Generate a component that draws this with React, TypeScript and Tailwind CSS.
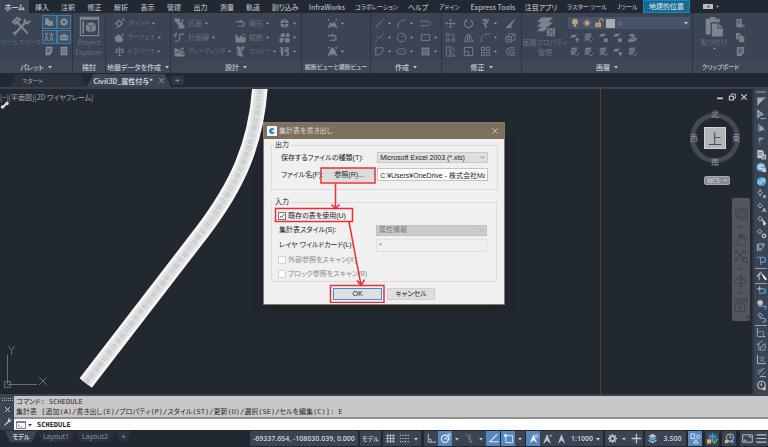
import React from 'react';
import { clsx } from 'clsx';

// Icons share a 12x12 grid and take their colour from the text.
const ICONS: Record<string, React.ReactNode> = {
  tools: (
    <>
      <path d="M2.6 2.6 9.6 10" strokeWidth="1.3" />
      <path d="M9 3 2.4 9.9" strokeWidth="1.3" />
      <path d="M1 3.4 3.6 1l1.6 1-2.6 2.6zM8 1.6 7.6 3.8 9.6 4.2 11 2.8M1.2 9.2l1.4 1.6" strokeWidth="1.1" />
    </>
  ),
  palette1: <path d="M2 2h3v2h1v5H2zM7 5h3v5H5V9h2z" fill="currentColor" />,
  gear: (
    <>
      <circle cx="6" cy="6" r="2.6" strokeWidth="1.8" />
      <path d="M6 1v2M6 9v2M1 6h2M9 6h2M2.5 2.5l1.3 1.3M8.2 8.2l1.3 1.3M9.5 2.5 8.2 3.8M3.8 8.2 2.5 9.5" strokeWidth="1.5" />
    </>
  ),
  survey: <path d="M1 2h4M3 2v3L1 11M3 5l2 6M7 3h4M9 1v4l-2 6M9 5l2 6" />,
  toolbox: (
    <>
      <path d="M1.5 4.5h9v5h-9z" fill="currentColor" />
      <path d="M4 4V2.5h4V4" />
      <path d="M1.5 7h9" stroke="#3b4a5e" />
    </>
  ),
  sheet: (
    <>
      <path d="M2 1h8v6l-3 4H2z" fill="currentColor" stroke="none" />
      <path d="M3.5 3.5h5M3.5 5.5h5M3.5 7.5h3" stroke="#3b4453" />
    </>
  ),
  calc: (
    <>
      <path d="M2 1h8v10H2z" fill="currentColor" stroke="none" />
      <path d="M3.5 3.5h5M3.5 6h5M3.5 8.5h5" stroke="#3b4453" strokeDasharray="2 1" />
    </>
  ),
  explorer: (
    <>
      <path d="M.8.8h10.4v10.4H.8z" strokeWidth=".7" />
      <path d="M.8 1.6h10.4M2.4 3v7" strokeWidth="1" />
      <path d="M6.8 3.4 9.6 4.6v3.6L6.8 9.6 4 8.2V4.6z" fill="currentColor" stroke="none" />
      <path d="M4 4.7l2.8 1.3 2.8-1.3M6.8 6v3.4" stroke="#3b4453" strokeWidth=".4" />
    </>
  ),
  point: (
    <>
      <path d="M2 6l3.4-3.4L9 6 5.4 9.6z" strokeWidth="1.4" />
      <path d="M7.5 4.5 11 1M9 1.2h2v2M3 10l-1 1.5" />
    </>
  ),
  surface: (
    <>
      <path d="M1 6l4-3 3 2 2 4-3 2-5-1z" fill="currentColor" />
      <path d="M8 3h3M9.5 1.5v3" />
    </>
  ),
  traverse: <path d="M6 1v10M1.5 3.5h9M3 3.5 1.5 7h3L3 3.5M9 3.5 7.500 7h3L9 3.500M4 10.500h4" />,
  parcel: (
    <>
      <path d="M1 1h5v3H1zM3 5h6v3H5zM6 8h5v3H5z" fill="currentColor" />
      <path d="M8 2.500h3M9.500 1v3" />
    </>
  ),
  featureLine: <path d="M1 9.500c3 2 6-1 5-4S8 1 11 3M1 3l2-2M1 6V3h2" strokeWidth="1.3" />,
  grading: (
    <>
      <path d="M1 2.500 4 4l7 3v4H1z" fill="currentColor" />
      <path d="M1 8l4-2 6 3" stroke="#3b4453" />
      <path d="M7 3h4M9 1v4" />
    </>
  ),
  align: <path d="M1 4h6c4 0 4 5 0 5H3M5 2l3 2" strokeWidth="1.2" />,
  profile: (
    <>
      <path d="M1 11V3l3 4 3-3 2 3 2-2v6z" fill="currentColor" />
      <path d="M8 2.500h3" />
    </>
  ),
  corridor: (
    <>
      <path d="M2 1h3l3 10H5zM7 1h3L8 5z" fill="currentColor" />
      <path d="M1 6l3 5" />
    </>
  ),
  globe: (
    <>
      <circle cx="6" cy="6" r="4.600" fill="currentColor" stroke="none" />
      <path d="M6 1.500v9M1.500 6h9" stroke="#3b4453" />
    </>
  ),
  assembly: <path d="M1 7h4l-1 4H1zM7 7h4v4H7zM3 2h3v3H2zM8 2h3v3H8z" fill="currentColor" />,
  pipes: <path d="M1 2h3v8M3 3v8M7 2h3v2H7v2h3v4H7M1 6h3" strokeWidth="1.500" />,
  view1: (
    <>
      <path d="M2 9l2-4 2 2 2-3 2 5z" fill="currentColor" />
      <path d="M1 1.500h2M9 1.500h2M1 10.500h2M9 10.500h2M1.500 1v2M10.500 1v2M1.500 9v2M10.500 9v2" />
    </>
  ),
  view2: (
    <>
      <path d="M2 9l2-5h4l2 5z" fill="currentColor" />
      <circle cx="6" cy="3.500" r="1.500" fill="currentColor" />
      <path d="M1 1.500h2M9 1.500h2M1 10.500h2M9 10.500h2M1.500 1v2M10.500 1v2M1.500 9v2M10.500 9v2" />
    </>
  ),
  line: <path d="M1.500 10.500l9-9" />,
  arc: <path d="M2 10.500C2 5 5 2 10.500 2" />,
  pline: <path d="M1 3.500h7c4 0 4 5 0 5H1M1 2.500v2" />,
  xline: <path d="M1.500 10.500l9-9M2 4l3 3M7 5l3 3" strokeDasharray="2.500 1" />,
  circle: (
    <>
      <circle cx="6" cy="6" r="4.700" />
      <path d="M6 6l3-2.500" />
    </>
  ),
  rect: <path d="M1.500 2.800h9v6.400h-9z" />,
  spline: <path d="M2 10V2h8c0 5-3 8-8 8zM1 3l2-2" />,
  ellipse: (
    <>
      <ellipse cx="6" cy="6" rx="4.800" ry="3" />
      <path d="M5.500 6h1" />
    </>
  ),
  hatch: (
    <>
      <path d="M2.500 2.500h7v7h-7z" fill="currentColor" fillOpacity=".6" />
      <path d="M1 2.500h10M1 9.500h10M2.500 1v10M9.500 1v10" strokeWidth=".7" />
    </>
  ),
  move: <path d="M6 1v10M1 6h10M4.500 2.500 6 1l1.500 1.500M4.500 9.500 6 11l1.500-1.500M2.500 4.500 1 6l1.500 1.500M9.500 4.500 11 6 9.500 7.500" />,
  rotate: <path d="M8 2.200A4.400 4.400 0 1 1 4 2.200M4 .8v2.500H1.800" strokeWidth="1.100" />,
  trim: <path d="M2 2h8M6 1v10M3 5l5 5M9 4 6 6M3 2l6 3" strokeWidth="1.200" />,
  brush: <path d="M11 1 5.500 6.500l1 1zM5.500 7c-2 0-2.500 3-4.500 3.500h6z" fill="currentColor" />,
  copy: (
    <>
      <circle cx="3" cy="3" r="1.700" />
      <circle cx="3" cy="8.800" r="1.700" />
      <circle cx="9" cy="8.800" r="1.700" />
      <path d="M6 3h3.500v3" />
    </>
  ),
  mirror: <path d="M5 2v8.500H1zM7 2v8.500h4z" />,
  fillet: <path d="M1.500 11V8c0-4 2-6 6-6H11" strokeDasharray="3 .5" />,
  explode: <path d="M1 5h6v6H1zM3 5V3.500L5 2h6v6l-2 1H7M7 5l3-2M3.500 7h1.500v2H3.500z" />,
  stretch: <path d="M1.500 1h4v10h-4zM5.500 5l5 6h-5M7 1l4 5" />,
  scale: <path d="M1.500 1.500h9v9h-9zM1.500 6H6v4.500" />,
  array: <path d="M1.500 1.500h3.500v3.500H1.500zM7 1.500h3.500v3.500H7zM1.500 7h3.500v3.500H1.500zM7 7h3.500v3.500H7z" />,
  offset: <path d="M11 2H5.500a4 4 0 0 0 0 8H11M11 4.500H6a1.500 1.500 0 0 0 0 3h5" />,
  layers: (
    <>
      <path d="M3.800 1H10L7.600 3.400H1.400zM3.800 3.600H10L7.600 6H1.400zM3.800 6.200h3L5.400 8.600h-4z" fill="currentColor" strokeWidth=".3" />
      <path d="M6.800 7h4.600v4.600H6.800z" fill="currentColor" stroke="none" />
      <path d="M8 7v1.600h2.200V7M8 11.600V9.800h2.400v1.800" stroke="#3b4453" strokeWidth=".5" />
    </>
  ),
  layerA: (
    <>
      <path d="M3.500 3H9L6 6H1z" fill="currentColor" stroke="none" />
      <circle cx="9" cy="8" r="1.800" fill="currentColor" stroke="none" />
      <path d="M9 9v2.500" />
    </>
  ),
  layerB: (
    <>
      <path d="M3.500 1.500H10L7 4.500H1zM3.500 4H10L7 7H1zM3.500 6.500H8L6 9.500H1z" fill="currentColor" stroke="#3b4453" strokeWidth=".4" />
      <path d="M7 9.500l1.200 1.500L11 7.500" />
    </>
  ),
  layerC: (
    <>
      <path d="M3.500 2H9L6 5H1z" fill="currentColor" stroke="none" />
      <path d="M6.500 7h4v4h-4z" fill="currentColor" stroke="none" />
    </>
  ),
  layerD: (
    <>
      <path d="M5.500 1.500l4 2-4 2-4-2zM1 9l2-2 5-2 3 2-1 2-4 2H2z" fill="currentColor" stroke="none" />
      <path d="M1.500 6.500l4 1.800 4.500-2" stroke="#3b4453" strokeWidth=".6" />
    </>
  ),
  bulb: (
    <>
      <circle cx="6" cy="4.500" r="3.500" fill="#c2a566" stroke="none" />
      <path d="M4.500 8h3v2.500h-3z" fill="#a9adb3" stroke="none" />
    </>
  ),
  sun: (
    <>
      <circle cx="6" cy="6" r="2.800" fill="#c2a566" stroke="none" />
      <path d="M6 .8v10.400M.8 6h10.400M2.300 2.300l7.400 7.400M9.700 2.300 2.300 9.700" stroke="#c2a566" strokeWidth=".8" />
    </>
  ),
  unlock: (
    <>
      <path d="M1.500 5.500h7V11h-7z" fill="#c2a566" stroke="none" />
      <path d="M6.800 6V2.500a1.900 1.900 0 0 1 3.700 0V4" stroke="#c2a566" strokeWidth="1.200" />
      <path d="M5 7.500v2" stroke="#46536a" />
    </>
  ),
  paste: (
    <>
      <path d="M1 1.500h8v2H3.800v7H1zM3.500.5h3v1.500h-3z" fill="currentColor" stroke="none" />
      <path d="M4.500 4.300h3.700l2.600 2.500v4.900H4.500z" fill="currentColor" stroke="none" />
      <path d="M8 4.300V7h2.800" stroke="#3b4453" strokeWidth=".5" />
    </>
  ),
  cut: (
    <>
      <path d="M1.500 1h6v9h-6z" fill="currentColor" stroke="none" />
      <path d="M3 3.500h3M3 5.500h3" stroke="#3b4453" />
      <path d="M6 6l5 5M11 6l-5 5" />
    </>
  ),
  clone: (
    <>
      <path d="M1 1h5v7H1z" fill="currentColor" stroke="none" />
      <path d="M4 3.500h4l2.500 2.500v5.500H4z" fill="currentColor" stroke="#3b4453" strokeWidth=".6" />
    </>
  ),
  cursorL: (
    <>
      <path d="M1.500 1.500h9l-9 9z" fill="currentColor" fillOpacity=".8" stroke="none" />
      <path d="M7 3l3.500-1.500" stroke="#5a9bd5" />
    </>
  ),
  cursorR: <path d="M2 1v9l2.500-3L8 6zM5 10.500h6" strokeDasharray="4 .6" fill="currentColor" fillOpacity=".5" />,
  cursorB: (
    <>
      <path d="M4 2v8l2-2h3z" fill="#7fa8cf" stroke="none" />
      <path d="M3 1v8M6 3l3 5" strokeWidth=".8" />
    </>
  ),
  cursorS: <path d="M2.500 2h7L4.500 5v5.500z" fill="currentColor" fillOpacity=".6" stroke="none" />,
  docs: (
    <>
      <path d="M1.500 1h5l2 2v7h-7zM6 6h5v5.500H6z" fill="currentColor" stroke="none" />
      <path d="M3 4h4M3 6h3M7 8h3M7 10h3" stroke="#3b4453" strokeWidth=".7" />
    </>
  ),
  earth: (
    <>
      <circle cx="5.500" cy="5.500" r="4.800" fill="#5fb2dc" stroke="none" />
      <path d="M2 3.500c2 2 4-1 6 .5M2 7c1-2 3 1 5 0" stroke="#e2e9ee" strokeWidth="1.300" />
      <path d="M7 7h4v4H7z" fill="#c9ccd0" stroke="none" />
    </>
  ),
  earth2: (
    <>
      <circle cx="6" cy="6" r="5" fill="#4aa2d2" stroke="none" />
      <circle cx="4" cy="7" r="1.700" stroke="#dbe7ef" />
      <circle cx="8" cy="4.500" r="1.700" stroke="#dbe7ef" />
    </>
  ),
  nodeBlue: (
    <>
      <path d="M4.500 1.500l2.500 2.500-2.500 2.500L2 4zM4.500 0v2M4.500 6v2" />
      <path d="M7.500 6.500h3.500V10H7.500z" fill="#5aa7e0" stroke="none" />
    </>
  ),
  nodeA: <path d="M4.500 1.500l2.500 2.500-2.500 2.500L2 4zM7 11l2-4.500 2 4.500M7.800 9.500h2.400" />,
  nodeCursor: (
    <>
      <path d="M4.500 1.500l2.500 2.500-2.500 2.500L2 4z" />
      <path d="M7 5l4 4.500H9.500L10 11H8.500z" fill="#eef0f2" />
    </>
  ),
  nodeQ: (
    <>
      <path d="M4 1.500l2.500 2.500L4 6.500 1.500 4z" />
      <circle cx="8.800" cy="8.500" r="1.900" strokeWidth="1.400" />
    </>
  ),
  flag: (
    <>
      <path d="M1.500 2v8M3 2v6c3 0 6-2 6-6zM3 9h3" strokeWidth=".9" />
      <path d="M5 4l4-1" stroke="#5aa7e0" />
    </>
  ),
  road: <path d="M1 2.500h6.500c4 0 4 5.500 0 5.500H5V11M5 2.500V8" stroke="#5a9bd5" strokeWidth="1.200" />,
  peak: (
    <>
      <path d="M1 8l4-6 4 5M3.500 4v7M1 6l5-2" />
      <path d="M7 5l4.500 5H9.500z" fill="#fff" stroke="#fff" />
    </>
  ),
  curve: (
    <>
      <path d="M1 4h5M4 1v6" />
      <path d="M6 4c6 0 6 5 0 5H3" stroke="#5a9bd5" strokeWidth="1.300" />
    </>
  ),
  blob: (
    <>
      <circle cx="4.500" cy="4" r="3" fill="currentColor" stroke="none" />
      <path d="M3 8h5c4-2 4 3 1 3" stroke="#5a9bd5" strokeWidth="1.300" />
    </>
  ),
  nodeCurve: (
    <>
      <path d="M4.500 1l2.500 2.500L4.500 6 2 3.500z" />
      <path d="M4 7h4c4 0 3 4-1 4" stroke="#5a9bd5" strokeWidth="1.300" />
    </>
  ),
  angle: (
    <>
      <path d="M1.500 1v9.500H11" strokeDasharray="3 .7" />
      <path d="M2 5h6v5" stroke="#5a9bd5" />
    </>
  ),
  angle2: (
    <>
      <path d="M1 5l6-4M3 4v7h7V3" strokeDasharray="2 .7" />
      <path d="M4 10l5-6" stroke="#5a9bd5" strokeWidth="1.300" />
    </>
  ),
  angle3: (
    <>
      <path d="M1.500 1v9.500H11" />
      <path d="M3 4h6L4 9M5 6l5 3" stroke="#5a9bd5" />
    </>
  ),
  angle4: (
    <>
      <path d="M2 8l7-7M4 10.500h7" />
      <path d="M1 5l5-3M5 10l5-5" stroke="#5a9bd5" />
    </>
  ),
  timer: (
    <>
      <circle cx="6" cy="5.500" r="4.200" strokeWidth="1.200" />
      <path d="M6 3v3l-2-1" />
      <circle cx="9" cy="9.500" r="1.900" fill="#dfbf78" stroke="none" />
    </>
  ),
  grid: <path d="M3 1v10M6 1v10M9 1v10M1 3h10M1 6h10M1 9h10" strokeWidth=".9" />,
  dots: <path d="M1 2.500h10M1 6h10M1 9.500h10" strokeWidth="1.300" strokeDasharray="1.300 1.500" />,
  ortho: <path d="M2.500 1v9H11M2.500 7h3v3" />,
  polar: (
    <>
      <circle cx="5.500" cy="6.300" r="4" strokeWidth="1.200" />
      <path d="M5 6.500h6M5 6.500 10 2M8 1h3v3" />
    </>
  ),
  iso: (
    <>
      <path d="M2 1l7 10" stroke="#a95a61" strokeWidth="1.200" />
      <path d="M6.500 1v7M6.500 9v2" stroke="#5f9a63" />
    </>
  ),
  track: <path d="M10 1.500 2 9.500h9.500" strokeWidth="1.200" />,
  snap: (
    <>
      <path d="M3 3h7.500v7.500H3z" />
      <path d="M1.500 1.500h2.500v2.500h-2.500z" fill="currentColor" strokeWidth=".6" />
    </>
  ),
  scaleA: (
    <>
      <path d="M6 1 2 11l4-3 4 3z" fill="currentColor" stroke="none" />
      <circle cx="9.500" cy="3" r="1.500" />
    </>
  ),
  scaleB: <path d="M5.500 2 2 11l3.500-3L9 11zM8 3h3M9.500 1.500v3" fill="currentColor" strokeWidth=".7" />,
  scaleC: <path d="M6 2 2.500 11 6 8l3.500 3z" fill="currentColor" strokeWidth=".5" />,
  plus: <path d="M6 .8v10.400M.8 6h10.400" strokeWidth="1.400" />,
  stack: (
    <>
      <path d="M6 .8l4.500 2.700L6 6 1.500 3.500zM6 11.200 1.500 8.500V7L6 9.500 10.500 7v1.500z" fill="currentColor" stroke="none" />
      <path d="M6 3.800 10.500 6 6 8.600 1.500 6z" fill="#5aa7e0" stroke="none" />
    </>
  ),
  shapes: (
    <>
      <path d="M1 1h4v5H1zM4 11l2.500-4L9 11z" />
      <circle cx="9" cy="4" r="1.800" />
    </>
  ),
  world: (
    <>
      <path d="M2 1h8v8H2z" fill="#2f6fb0" stroke="none" />
      <path d="M6 0v9M1 4h10" stroke="#7ba7cf" strokeWidth=".7" />
      <path d="M0 7h4.500v4.500H0z" fill="#f0b53a" stroke="none" />
      <path d="M5.500 8l2.500 3 4-5" stroke="#57b556" strokeWidth="1.600" />
    </>
  ),
  clock: (
    <>
      <circle cx="6.500" cy="5" r="4" />
      <path d="M6.500 2.500V5h2" />
      <path d="M1 7.500h4V11H1z" fill="#e0b95a" stroke="none" />
      <circle cx="8.500" cy="9.300" r="2" fill="#5aa7e0" stroke="none" />
    </>
  ),
  expand: <path d="M.8 2h10.400v8H.8zM3 7v1.300h1.800M7 3.700h2V5.500" />,
  menu: <path d="M.5 2h11M.5 6h11M.5 10h11" strokeWidth="1.300" />,
  wrench: <path d="M1.500 10.500 7 5a3 3 0 0 1 2-4l-.5 2.500 1 1L11.500 3A3 3 0 0 1 8 6.500l-5.500 5z" fill="currentColor" stroke="none" />,
  cross: <path d="M2 2l8 8M10 2l-8 8" strokeWidth="1.700" />,
  closeThin: <path d="M2 2l8 8M10 2l-8 8" strokeWidth="1.100" />,
  minimize: <path d="M1.500 8h9" strokeWidth="2.500" />,
  restore: (
    <>
      <path d="M2 5h6v5.500H2z" strokeWidth="1.600" />
      <path d="M4.500 4V1.500H11V8H9" strokeWidth="1.300" />
    </>
  ),
  wheel: (
    <>
      <circle cx="6" cy="6" r="2.200" strokeWidth=".7" />
      <path d="M3 1.500h6A1.500 1.500 0 0 1 10.800 3v6A1.500 1.500 0 0 1 9 10.500H6A4.800 4.800 0 0 1 1.200 6V3A1.500 1.500 0 0 1 3 1.500z" strokeWidth=".6" />
      <circle cx="6" cy="6" r="3.800" strokeWidth=".5" />
    </>
  ),
  hand: <path d="M3.500 11 1 7.500l.8-.7L4 8V3l1-.3L5.700 6V1.500h1V6L7.800 2l1 .2L8.500 6.500l1.300-2 .9.400L9 11z" strokeWidth=".6" />,
  extents: (
    <>
      <path d="M1 1l7 7M9 1 1 9M1 3V1h2M7 1h2v2M1 7v2h2" strokeWidth=".8" />
      <circle cx="8.500" cy="8.500" r="1.800" strokeWidth=".8" />
      <path d="M10 10l1.500 1.500" />
    </>
  ),
  orbit: (
    <>
      <ellipse cx="6" cy="6" rx="5" ry="2" strokeWidth=".8" />
      <path d="M6 1v10M4.500 2.500 6 1l1.500 1.500M4.500 9.500 6 11l1.500-1.500" strokeWidth=".8" />
    </>
  ),
  motion: <path d="M.5.8h3v2.700h-3zM4.500.8h3v2.700h-3zM8.500.8h3v2.700h-3zM1 5h8v6.500H1zM4 6.500v3.500L7 8.200z" strokeWidth=".6" />,
};

interface IconProps {
  name: string;
  className?: string;
}

function Icon({ name, className = 'size-[10px]' }: IconProps) {
  return (
    <svg viewBox="0 0 12 12" fill="none" stroke="currentColor" strokeWidth="1" className={clsx('shrink-0', className)} aria-hidden="true">
      {ICONS[name]}
    </svg>
  );
}

function Caret({ className = 'size-[4px]' }: { className?: string }) {
  return (
    <svg viewBox="0 0 4 4" className={clsx('shrink-0', className)} aria-hidden="true">
      <path d="M0 1h4L2 3.400z" fill="currentColor" />
    </svg>
  );
}

const MENU_TABS = [
  { label: '挿入', size: 'w-[26px]' },
  { label: '注釈', size: 'w-[26px]' },
  { label: '修正', size: 'w-[27px]' },
  { label: '解析', size: 'w-[26px]' },
  { label: '表示', size: 'w-[27px]' },
  { label: '管理', size: 'w-[26px]' },
  { label: '出力', size: 'w-[27px]' },
  { label: '測量', size: 'w-[26px]' },
  { label: '軌道', size: 'w-[26px]' },
  { label: '割り込み', size: 'w-[38px]' },
  { label: 'InfraWorks', size: 'w-[46px]' },
  { label: 'コラボレーション', size: 'w-[53px] text-[6px]' },
  { label: 'ヘルプ', size: 'w-[30px]' },
  { label: 'アドイン', size: 'w-[33px] text-[6px]' },
  { label: 'Express Tools', size: 'w-[54px]' },
  { label: '注目アプリ', size: 'w-[42px]' },
  { label: 'ラスター ツール', size: 'w-[50px] text-[6px]' },
  { label: 'Jツール', size: 'w-[31px] text-[6px]' },
];

function MenuTabs() {
  return (
    <nav className="flex h-[13px] bg-[#222832] text-[#b1b5ba]">
      <button className="w-[29px] shrink-0 bg-[#3b4453] font-bold text-[#c9cdd2]">ホーム</button>
      {MENU_TABS.map((tab) => (
        <button key={tab.label} className={clsx('flex shrink-0 items-center justify-center font-medium', tab.size)}>
          {tab.label}
        </button>
      ))}
      <button className="w-[47px] shrink-0 border border-[#1c86b4] bg-[#156a92] font-medium leading-[11px] text-[#d3dde3]">
        地理的位置
      </button>
      <button className="ml-[13px] flex items-center gap-[3px]" aria-label="表示切替">
        <span className="grid h-[5px] w-[10px] place-items-center bg-[#b9bdc1] text-[#222832]">
          <Caret className="size-[3px] rotate-180" />
        </span>
        <Caret className="size-[3px]" />
      </button>
    </nav>
  );
}

interface PanelProps {
  title: string;
  size: string;
  caret?: boolean;
  children: React.ReactNode;
}

function Panel({ title, size, caret = true, children }: PanelProps) {
  return (
    <section className={clsx('flex shrink-0 flex-col border-r border-[#2c3440]', size)}>
      <div className="flex flex-1 pt-[3px]">{children}</div>
      <h2
        className={clsx(
          'flex h-[13px] items-center justify-center gap-[4px] bg-[#3e4756] font-medium text-[#c3c7cc]',
          title.length > 8 ? 'text-[6px]' : 'text-[7px]',
        )}
      >
        {title}
        {caret && <Caret />}
      </h2>
    </section>
  );
}

interface ToolProps {
  icon: string;
  label?: string;
  caret?: boolean;
}

function Tool({ icon, label, caret }: ToolProps) {
  return (
    <button className="flex h-[14px] items-center gap-[3px]" aria-label={label ?? icon}>
      <Icon name={icon} className="size-[11px] text-[#79808a]" />
      {label && <span className={clsx('text-[#69717c]', label.length > 3 && 'text-[6px]')}>{label}</span>}
      {caret && <Caret className="size-[3px] text-[#a5aab0]" />}
    </button>
  );
}

function ToolColumn({ tools, className }: { tools: ToolProps[]; className?: string }) {
  return (
    <div className={clsx('flex shrink-0 flex-col items-start', className)}>
      {tools.map((tool) => (
        <Tool key={tool.icon} {...tool} />
      ))}
    </div>
  );
}

function BigTool({ icon, lines, className, caret }: { icon: string; lines: string[]; className?: string; caret?: boolean }) {
  return (
    <button className={clsx('flex shrink-0 flex-col items-center text-[#69717c]', className)}>
      <Icon name={icon} className="size-[21px] text-[#7d848e]" />
      {lines.map((line) => (
        <span key={line} className="h-[10px] leading-[10px]">
          {line}
        </span>
      ))}
      {caret && <Caret className="size-[3px] text-[#9ea3aa]" />}
    </button>
  );
}

function Ribbon() {
  return (
    <div className="flex h-[60px] bg-[#3b4453]">
      <Panel title="パレット" size="w-[73px]">
        <BigTool icon="tools" lines={['ツールスペース']} className="w-[42px] text-[6px]" />
        <div className="-mt-px grid h-[44px] w-[29px] grid-cols-2">
          {['palette1', 'gear', 'survey', 'toolbox'].map((name) => (
            <button
              key={name}
              aria-label={name}
              className="grid h-[14px] place-items-center border border-[#3f7ba3] bg-[#3d5066] text-[#8e969f]"
            >
              <Icon name={name} />
            </button>
          ))}
          {['sheet', 'calc'].map((name) => (
            <button key={name} aria-label={name} className="grid h-[14px] place-items-center text-[#8a9099]">
              <Icon name={name} />
            </button>
          ))}
        </div>
      </Panel>
      <Panel title="検討" size="w-[33px]" caret={false}>
        <BigTool icon="explorer" lines={['Project', 'Explorer']} className="w-full" />
      </Panel>
      <Panel title="地盤データを作成" size="w-[65px]">
        <ToolColumn
          className="pl-[8px]"
          tools={[
            { icon: 'point', label: 'ポイント', caret: true },
            { icon: 'surface', label: 'サーフェス', caret: true },
            { icon: 'traverse', label: 'トラバース', caret: true },
          ]}
        />
      </Panel>
      <Panel title="設計" size="w-[131px]">
        <ToolColumn
          className="w-[64px] pl-[3px]"
          tools={[
            { icon: 'parcel', label: '区画', caret: true },
            { icon: 'featureLine', label: '計画線', caret: true },
            { icon: 'grading', label: 'グレーディング', caret: true },
          ]}
        />
        <ToolColumn
          className="w-[44px]"
          tools={[
            { icon: 'align', label: '線形', caret: true },
            { icon: 'profile', label: '縦断', caret: true },
            { icon: 'corridor', label: 'コリドー', caret: true },
          ]}
        />
        <ToolColumn
          tools={[
            { icon: 'globe', caret: true },
            { icon: 'assembly', caret: true },
            { icon: 'pipes', caret: true },
          ]}
        />
      </Panel>
      <Panel title="縦断ビューと横断ビュー" size="w-[69px]" caret={false}>
        <ToolColumn
          className="pl-[25px]"
          tools={[{ icon: 'view1', caret: true }, { icon: 'align' }, { icon: 'view2', caret: true }]}
        />
      </Panel>
      <Panel title="作成" size="w-[71px]">
        <ToolColumn
          className="w-[22px] pl-[3px]"
          tools={[
            { icon: 'line', caret: true },
            { icon: 'xline', caret: true },
            { icon: 'spline', caret: true },
          ]}
        />
        <ToolColumn
          className="w-[24px] pl-[3px]"
          tools={[
            { icon: 'arc', caret: true },
            { icon: 'circle', caret: true },
            { icon: 'ellipse', caret: true },
          ]}
        />
        <ToolColumn
          className="pl-[3px]"
          tools={[{ icon: 'pline' }, { icon: 'rect', caret: true }, { icon: 'hatch', caret: true }]}
        />
      </Panel>
      <Panel title="修正" size="w-[80px]">
        <ToolColumn className="w-[21px] pl-[3px]" tools={[{ icon: 'move' }, { icon: 'copy' }, { icon: 'stretch' }]} />
        <ToolColumn className="w-[17px]" tools={[{ icon: 'rotate' }, { icon: 'mirror' }, { icon: 'scale' }]} />
        <ToolColumn
          className="w-[25px]"
          tools={[
            { icon: 'trim', caret: true },
            { icon: 'fillet', caret: true },
            { icon: 'array', caret: true },
          ]}
        />
        <ToolColumn tools={[{ icon: 'brush' }, { icon: 'explode' }, { icon: 'offset' }]} />
      </Panel>
      <Panel title="画層" size="w-[171px]">
        <BigTool icon="layers" lines={['画層プロパティ', '管理']} className="w-[46px]" />
        <div className="flex flex-1 flex-col pr-[2px]">
          <button className="mt-px flex h-[12px] items-center gap-[2px] bg-[#46536a] px-[2px] text-[#7c8492]">
            <Icon name="bulb" />
            <Icon name="sun" />
            <Icon name="unlock" />
            <span className="size-[9px] bg-[#a9adb3]" />
            <span className="flex-1 pl-px text-left">0</span>
            <Caret className="size-[4px] text-[#c3c7cc]" />
          </button>
          <div className="mt-px grid w-[72px] grid-cols-5 text-[#79808a]">
            {['layerA', 'layerB', 'layerC', 'layerC', 'layerD', 'layerB', 'layerB', 'layerB', 'layerA', 'layerB'].map((name, i) => (
              <button key={i} aria-label="画層" className="flex h-[14px] items-center pl-px">
                <Icon name={name} className="size-[11px]" />
              </button>
            ))}
          </div>
        </div>
      </Panel>
      <section className="flex flex-1 flex-col">
        <div className="flex flex-1 pt-[3px] pl-[9px]">
          <BigTool icon="paste" lines={['貼り付け']} className="w-[24px]" caret />
          <ToolColumn className="pl-[9px]" tools={[{ icon: 'cut' }, { icon: 'clone' }, { icon: 'sheet' }]} />
        </div>
        <h2 className="flex h-[13px] items-center bg-[#3e4756] pl-[9px] text-[6px] font-medium text-[#c3c7cc]">クリップボード</h2>
      </section>
    </div>
  );
}

function FileTabs() {
  return (
    <nav className="flex h-[16px] items-end border-b-2 border-[#38404e] bg-[#222832] pl-[10px] text-[#a3a8ae]">
      <button className="h-[13px] w-[77px] bg-[#2b323d] pr-[40px] [clip-path:polygon(6px_0,calc(100%-6px)_0,100%_100%,0_100%)]">
        <span className="pl-[8px] text-[6px]">スタート</span>
      </button>
      <button className="flex h-[13px] w-[84px] items-center justify-center gap-[5px] bg-[#3b4453] text-[7px] font-bold text-[#cdd0d4] [clip-path:polygon(6px_0,calc(100%-6px)_0,100%_100%,0_100%)]">
        Civil3D_属性付与*
        <Icon name="closeThin" className="size-[7px]" />
      </button>
      <button aria-label="新規図面" className="mb-[2px] grid h-[9px] w-[13px] place-items-center rounded-[3px] bg-[#2f3743]">
        <Icon name="plus" className="size-[5px]" />
      </button>
    </nav>
  );
}

// Corridor centre line in canvas coordinates, from the top edge down to its start point.
const CORRIDOR = 'M260 -2C256 56 237 97 202 143L85.700 294';

function Drawing() {
  return (
    <svg className="absolute inset-0 size-full" fill="none">
      <path d="M600.500 0V2000" stroke="#5f4128" strokeWidth="1" />
      <g>
        <path d={CORRIDOR} stroke="#f6f6f6" strokeWidth="15.500" />
        <path d={CORRIDOR} stroke="#dfe0e1" strokeWidth="10" />
        <path d={CORRIDOR} stroke="#d3d4d6" strokeWidth="5" />
        <path d={CORRIDOR} stroke="#c6c8ca" strokeWidth="3" strokeDasharray="9 4 2 3" />
        <path d={CORRIDOR} stroke="#dcddde" strokeWidth=".8" />
        <path d={CORRIDOR} stroke="#ececed" strokeWidth="11" strokeDasharray=".8 6.500" />
      </g>
      <g stroke="#686e75">
        <path d="M7.500 266v29.500H37M4.500 292.500h6v6h-6z" />
        <path d="M8.500 257l3 4.500 3-4.500M11.500 261.500v4.500M39 288l8 8M47 288l-8 8" />
      </g>
      <g fill="#d9dbdd">
        <circle cx="7" cy="14.500" r="1.800" />
        <circle cx="2.500" cy="18" r="1.800" />
        <path d="M3 16.500l3-3 1 2-3 3z" />
      </g>
    </svg>
  );
}

function ViewCube() {
  return (
    <div className="absolute top-[20px] right-[11px] grid h-[58px] w-[52px] grid-cols-[10px_32px_10px] grid-rows-[10px_38px_10px] place-items-center text-[8px] leading-[10px] text-[#9a9ea3]">
      <span className="absolute top-[4px] left-[1px] size-[50px] rounded-full border-[5px] border-[#434a51]" />
      <span className="relative col-start-2">北</span>
      <span className="relative col-start-1 row-start-2">西</span>
      <button className="relative col-start-2 row-start-2 grid size-[22px] place-items-center border border-[#d0d2d4] bg-[#b2b5b8] text-[14px] leading-[20px] text-[#4d5156]">
        上
      </button>
      <span className="relative col-start-3 row-start-2">東</span>
      <span className="relative col-start-2 row-start-3">南</span>
    </div>
  );
}

function NavBar() {
  return (
    <div className="absolute top-[109px] right-[2px] flex h-[123px] w-[18px] flex-col items-center justify-between rounded-[2px] bg-[#52575e] py-[2px] text-[#393e45]">
      <Icon name="closeThin" className="size-[4px] self-end" />
      <Icon name="wheel" className="size-[15px]" />
      <Caret />
      <Icon name="hand" className="size-[14px]" />
      <Icon name="extents" className="size-[15px]" />
      <Caret />
      <Icon name="orbit" className="size-[14px]" />
      <Caret />
      <Icon name="motion" className="size-[14px]" />
      <span className="size-[4px] self-end rounded-full border border-[#393e45]" />
    </div>
  );
}

const SIDE_TOOLS = [
  ['cursorL', 'cursorR', 'cursorB', 'cursorS', 'docs', 'earth', 'earth2', 'nodeBlue', 'nodeA', 'nodeCursor', 'nodeQ', 'flag', 'road'],
  ['peak'],
  ['curve', 'blob', 'nodeCurve'],
  ['angle', 'angle2', 'angle3', 'angle4', 'timer'],
];

function SideToolbar() {
  return (
    <aside className="flex w-[16px] shrink-0 flex-col border-l-2 border-[#2e3642] bg-[#3b4453] px-px pb-[2px] text-[#bfc3c8]">
      <span className="mx-px mt-[2px] mb-[2px] h-[2px] bg-[#6b727d]" />
      {SIDE_TOOLS.map((group, i) => (
        <React.Fragment key={i}>
          {i > 0 && <span className="h-[2px] border-b border-[#9da1a7]" />}
          {group.map((name) => (
            <button key={name} aria-label={name} className="grid flex-1 place-items-center">
              <Icon name={name} className="size-[11px]" />
            </button>
          ))}
        </React.Fragment>
      ))}
    </aside>
  );
}

function FieldArrow() {
  return (
    <svg viewBox="0 0 6 4" fill="none" stroke="currentColor" className="pointer-events-none absolute top-[4px] right-[3px] h-[3px] w-[5px]" aria-hidden="true">
      <path d="M.5.5 3 3 5.500.5" />
    </svg>
  );
}

const FIELD = 'w-[111px] shrink-0 px-[2px] text-[7px] leading-[8px]';

function ExportDialog() {
  return (
    <div
      role="dialog"
      aria-labelledby="dialog-title"
      className="absolute top-[122px] left-[263px] w-[242px] border border-[#857a66] bg-[#f0f0f0] font-['Liberation_Sans','Noto_Sans_CJK_JP',sans-serif] text-[7px] text-[#1c1c1c] shadow-lg"
    >
      <header className="flex h-[16px] items-center gap-[2px] bg-[#7d715d] px-[3px] text-[#dedad2]">
        <svg viewBox="0 0 10 10" className="size-[10px]" aria-hidden="true">
          <path d="M0 0h10v10H0z" fill="#f3f6f8" />
          <path d="M7.600 3.200A3 3 0 1 0 7.600 6.600L6 5.600 5 6 4.600 4.400 6 4z" fill="#2382bd" />
        </svg>
        <h1 id="dialog-title" className="flex-1">集計表を書き出し</h1>
        <button aria-label="閉じる" className="mr-[2px]">
          <Icon name="closeThin" className="size-[8px]" />
        </button>
      </header>
      <div className="px-[7px] pt-[2px] pb-[4px]">
        <fieldset className="border border-[#dcdcdc] pr-[9px] pb-[6px] pl-[9px]">
          <legend className="-ml-[8px] h-[8px] px-[2px] leading-[8px]">出力</legend>
          <div className="flex h-[17px] items-center">
            <label htmlFor="file-type" className="flex-1">保存するファイルの種類(T):</label>
            <div className="relative flex text-[#666]">
              <select id="file-type" className={clsx(FIELD, 'h-[11px] appearance-none border border-[#c9c9c9] bg-[#dfdfdf] text-[#1c1c1c]')}>
                <option>Microsoft Excel 2003 (*.xls)</option>
              </select>
              <FieldArrow />
            </div>
          </div>
          <div className="flex h-[17px] items-center">
            <label htmlFor="file-name" className="flex-1">ファイル名(F):</label>
            <button className="mr-[2px] h-[14px] w-[52px] bg-[#dcdcdc] text-[7px]">参照(R)...</button>
            <input
              id="file-name"
              className={clsx(FIELD, 'h-[13px] border border-[#c4c4c4] bg-white')}
              defaultValue="C:¥Users¥OneDrive - 株式会社Malme"
            />
          </div>
        </fieldset>
        <fieldset className="mt-[8px] border border-[#dcdcdc] pt-[2px] pr-[9px] pl-[7px]">
          <legend className="-ml-[6px] h-[8px] px-[2px] leading-[8px]">入力</legend>
          <label className="flex h-[15px] items-center gap-[2px]">
            <span className="relative -ml-px grid size-[8px]">
              <input type="checkbox" defaultChecked className="peer size-[8px] appearance-none border border-[#777] bg-white" />
              <svg viewBox="0 0 8 8" fill="none" stroke="#333" className="pointer-events-none absolute inset-0 hidden peer-checked:block" aria-hidden="true">
                <path d="M2 4l1.500 1.700L6.200 2.300" strokeWidth=".9" />
              </svg>
            </span>
            既存の表を使用(U)
          </label>
          <div className="flex h-[14px] items-center">
            <label htmlFor="table-style" className="flex-1">集計表スタイル(S):</label>
            <div className="relative flex text-[#a5a5a5]">
              <select id="table-style" disabled className={clsx(FIELD, 'h-[11px] appearance-none border border-[#c2c2c2] bg-[#cbcbcb] text-[#777] opacity-100')}>
                <option>属性情報</option>
              </select>
              <FieldArrow />
            </div>
          </div>
          <div className="flex h-[16px] items-center">
            <label htmlFor="layer-wildcard" className="flex-1">レイヤ ワイルドカード(L):</label>
            <input id="layer-wildcard" disabled defaultValue="*" className={clsx(FIELD, 'h-[13px] border border-[#e0e0e0] text-[#777]')} />
          </div>
          {['外部参照をスキャン(X)', 'ブロック参照をスキャン(B)'].map((label) => (
            <label key={label} className="flex h-[14px] items-center gap-[2px] text-[#8b8b8b]">
              <input type="checkbox" disabled className="-ml-px size-[8px] appearance-none border border-[#d2d2d2] bg-white" />
              {label}
            </label>
          ))}
        </fieldset>
        <div className="flex justify-center gap-[5px] pt-[6px]">
          <button className="h-[12px] w-[49px] border border-[#3f8fd8] bg-[#dfdfdf]">OK</button>
          <button className="h-[12px] w-[48px] border border-[#cfcfcf] bg-[#dfdfdf]">キャンセル</button>
        </div>
      </div>
      <svg className="pointer-events-none absolute -top-px -left-px size-full" fill="none" stroke="#e8303a" strokeWidth="1.500" aria-hidden="true">
        <path d="M58 46h54v15H58zM12.500 86.500h77v13h-77zM67.500 163.500h53.500v17H67.500z" />
        <path d="M72.500 61.500V86M68.500 82.500l4 4 4-4" />
        <path d="M86 100l12 63M94 158.500l4 5 3.500-6" />
      </svg>
    </div>
  );
}

function CommandLine() {
  return (
    <div className="flex h-[36px] bg-[#3b4453]">
      <div className="flex w-[14px] shrink-0 flex-col items-center justify-between pt-[4px] pb-[4px] text-[#d5d8db]">
        <span className="h-[3px] w-[11px] border-y border-dotted border-[#a6abb1]" />
        <Icon name="cross" className="size-[7px]" />
        <Icon name="wrench" className="size-[9px]" />
      </div>
      <div className="flex min-w-0 flex-1 flex-col pt-[2px]">
        <div className="h-[23px] border-b-2 border-[#8f9194] bg-[#c8c8c8] pt-[2px] pl-[2px] font-['DejaVu_Sans_Mono','Noto_Sans_CJK_JP',monospace] text-[7px] whitespace-nowrap text-[#2d2d2d]">
          <p className="h-[9px] leading-[9px]">コマンド: SCHEDULE</p>
          <p className="h-[10px] leading-[10px]">集計表 [追加(A)/書き出し(E)/プロパティ(P)/スタイル(ST)/更新(U)/選択(SE)/セルを編集(C)]: E</p>
        </div>
        <div className="flex h-[11px] items-center gap-[2px] bg-white pl-[2px] text-[#444]">
          <svg viewBox="0 0 10 8" fill="none" stroke="#666" className="h-[8px] w-[10px]" aria-hidden="true">
            <path d="M.5.5h9v7h-9zM.5 1.500h9M2 3.500l1.500 1L2 5.500M4.500 6h2" strokeWidth=".8" />
          </svg>
          <Caret />
          <input
            aria-label="コマンド"
            defaultValue="SCHEDULE"
            className="ml-[3px] h-[11px] flex-1 font-['DejaVu_Sans_Mono',monospace] text-[7px] font-bold text-[#1f1f1f] outline-none"
          />
        </div>
      </div>
    </div>
  );
}

function StatusIcon({ name, active, caret }: { name: string; active?: boolean; caret?: boolean }) {
  return (
    <>
      <button
        aria-label={name}
        className={clsx('grid h-[15px] w-[14px] shrink-0 place-items-center', active ? 'bg-[#5788bd] text-[#e4ebf2]' : 'bg-[#3b4453] text-[#c3c7cc]')}
      >
        <Icon name={name} className="size-[11px]" />
      </button>
      {caret && (
        <span className="grid h-[15px] w-[10px] shrink-0 place-items-center bg-[#3b4453] text-[#c3c7cc]">
          <Caret />
        </span>
      )}
    </>
  );
}

const LAYOUT_TAB = 'h-[11px] [clip-path:polygon(0_0,100%_0,calc(100%-5px)_100%,5px_100%)]';

function StatusBar() {
  return (
    <footer className="flex h-[17px] bg-[#222832] font-['Open_Sans','Noto_Sans_CJK_JP',sans-serif] text-[7px] text-[#d2d5d8]">
      <nav className="flex flex-1 pt-px pl-[5px] text-[#8f959d]">
        <button className={clsx(LAYOUT_TAB, 'w-[32px] bg-[#3b4453] text-[6px] font-bold text-[#cdd0d4]')}>モデル</button>
        <button className={clsx(LAYOUT_TAB, 'w-[38px] bg-[#2b323d]')}>Layout1</button>
        <button className={clsx(LAYOUT_TAB, 'w-[40px] bg-[#2b323d]')}>Layout2</button>
        <button className={clsx(LAYOUT_TAB, 'grid w-[16px] place-items-center bg-[#2b323d]')} aria-label="新規レイアウト">
          <Icon name="plus" className="size-[5px]" />
        </button>
      </nav>
      <div className="flex shrink-0 items-center">
        <span className="grid h-[15px] w-[108px] place-items-center bg-[#3b4453] font-semibold">-69337.654, -108030.039, 0.000</span>
        <button className="mx-[2px] h-[15px] w-[21px] bg-[#3b4453] text-[6px] font-medium">モデル</button>
        <StatusIcon name="grid" />
        <StatusIcon name="dots" caret />
        <span className="w-[3px]" />
        <StatusIcon name="ortho" />
        <StatusIcon name="polar" active caret />
        <StatusIcon name="iso" caret />
        <StatusIcon name="track" active />
        <span className="w-px" />
        <StatusIcon name="snap" active caret />
        <span className="w-px" />
        <StatusIcon name="scaleA" active />
        <StatusIcon name="scaleB" />
        <StatusIcon name="scaleC" />
        <button className="mr-[2px] flex h-[15px] w-[35px] items-center justify-center gap-[3px] bg-[#3b4453] font-semibold">
          1:1000
          <Caret />
        </button>
        <StatusIcon name="gear" caret />
        <StatusIcon name="plus" />
        <span className="w-[2px]" />
        <StatusIcon name="stack" />
        <button className="mr-[2px] h-[15px] w-[27px] bg-[#3b4453] font-semibold">3.500</button>
        <StatusIcon name="shapes" active />
        <span className="w-[3px]" />
        <StatusIcon name="world" />
        <span className="w-[3px]" />
        <StatusIcon name="clock" />
        <span className="w-[4px]" />
        <StatusIcon name="expand" />
        <StatusIcon name="menu" />
      </div>
    </footer>
  );
}

export default function App() {
  return (
    <div className="relative flex h-screen flex-col overflow-hidden bg-[#212830] font-['Noto_Sans_CJK_JP',sans-serif] text-[7px] leading-[10px] whitespace-nowrap [font-feature-settings:'palt']">
      <MenuTabs />
      <Ribbon />
      <FileTabs />
      <div className="flex min-h-0 flex-1">
        <main className="relative min-w-0 flex-1 overflow-hidden">
          <Drawing />
          <p className="relative mt-[3px] text-[#a9adb1]">[−][平面図][2D ワイヤフレーム]</p>
          <div className="absolute top-[4px] right-[4px] flex gap-[4px] text-[#d0d3d6]">
            {['minimize', 'restore', 'cross'].map((name) => (
              <button key={name} aria-label={name}>
                <Icon name={name} className="size-[8px]" />
              </button>
            ))}
          </div>
          <ViewCube />
          <button className="absolute top-[87px] right-[22px] flex h-[9px] w-[26px] items-center justify-between rounded-[2px] border border-[#a5a9b2] bg-[#868b96] px-[2px] text-[6px] text-[#d6d8dc]">
            WCS
            <Caret className="size-[3px]" />
          </button>
          <NavBar />
        </main>
        <SideToolbar />
      </div>
      <CommandLine />
      <StatusBar />
      <ExportDialog />
    </div>
  );
}
